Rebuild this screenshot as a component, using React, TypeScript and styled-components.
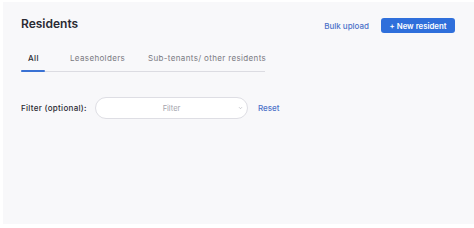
import React from "react";
import styled, { createGlobalStyle } from "styled-components";

const Global = createGlobalStyle`
  html, body { margin: 0; padding: 0; background: #ffffff; }
  body { font-family: "Inter", "Noto Sans", sans-serif; }
  * { box-sizing: border-box; }
`;

const Page = styled.div`
  width: 474px;
  height: 228px;
  padding: 2px 0 4px 3px;
  background: #ffffff;
`;

const Panel = styled.div`
  height: 100%;
  background: #f8f8fa;
  padding: 14px 19px 0 18px;
  display: flex;
  flex-direction: column;
`;

const Header = styled.div`
  display: flex;
  align-items: flex-start;
  justify-content: space-between;
`;

const Title = styled.h1`
  margin: 0;
  font-size: 12px;
  line-height: 16px;
  font-weight: 600;
  color: #2a2a33;
`;

const Actions = styled.div`
  display: flex;
  align-items: center;
  gap: 12px;
  margin-top: 2px;
`;

const LinkButton = styled.button`
  border: none;
  background: none;
  padding: 0;
  font-family: inherit;
  font-size: 8px;
  font-weight: 500;
  color: #4d72c9;
  cursor: pointer;
`;

const PrimaryButton = styled.button`
  border: none;
  height: 15px;
  width: 74px;
  border-radius: 3px;
  background: #2f6fdb;
  color: #ffffff;
  font-family: inherit;
  font-size: 7.8px;
  font-weight: 600;
  padding: 0;
`;

const Tabs = styled.div`
  display: flex;
  width: 244px;
  margin-top: 20px;
  border-bottom: 1px solid #dcdce2;
`;

const Tab = styled.div<{ $active?: boolean; $w: number }>`
  width: ${(p) => p.$w}px;
  padding: 0 0 7px ${(p) => (p.$active ? 7 : 0)}px;
  font-size: 8px;
  line-height: 11px;
  letter-spacing: 0.35px;
  white-space: nowrap;
  color: ${(p) => (p.$active ? "#2a2a33" : "#7a7a82")};
  font-weight: ${(p) => (p.$active ? 500 : 400)};
  position: relative;
  &::after {
    content: "";
    display: ${(p) => (p.$active ? "block" : "none")};
    position: absolute;
    left: 0;
    bottom: -1px;
    width: 24px;
    height: 2px;
    background: #3a72d4;
    border-radius: 1px;
  }
`;

const FilterRow = styled.div`
  display: flex;
  align-items: center;
  margin-top: 25px;
`;

const Label = styled.span`
  font-size: 8px;
  font-weight: 500;
  letter-spacing: 0.3px;
  color: #2a2a33;
  width: 74px;
  white-space: nowrap;
`;

const Select = styled.div`
  width: 153px;
  height: 22px;
  border: 1px solid #dedee4;
  border-radius: 11px;
  background: #ffffff;
  display: flex;
  align-items: center;
  position: relative;
`;

const Placeholder = styled.span`
  flex: 1;
  text-align: center;
  font-size: 7.5px;
  color: #a4a4ac;
`;

const Chevron = styled.svg`
  position: absolute;
  right: 4px;
  top: 8px;
`;

const ResetLink = styled(LinkButton)`
  margin-left: 10px;
`;

export default function App() {
  return (
    <>
      <Global />
      <Page>
        <Panel>
          <Header>
            <Title>Residents</Title>
            <Actions>
              <LinkButton>Bulk upload</LinkButton>
              <PrimaryButton>+ New resident</PrimaryButton>
            </Actions>
          </Header>
          <Tabs>
            <Tab $active $w={49}>All</Tab>
            <Tab $w={78}>Leaseholders</Tab>
            <Tab $w={117}>Sub-tenants/ other residents</Tab>
          </Tabs>
          <FilterRow>
            <Label>Filter (optional):</Label>
            <Select>
              <Placeholder>Filter</Placeholder>
              <Chevron width="5" height="4" viewBox="0 0 5 4">
                <path d="M1 1.2 L2.5 2.7 L4 1.2" stroke="#b4b4bc" strokeWidth="0.7" fill="none" />
              </Chevron>
            </Select>
            <ResetLink>Reset</ResetLink>
          </FilterRow>
        </Panel>
      </Page>
    </>
  );
}
